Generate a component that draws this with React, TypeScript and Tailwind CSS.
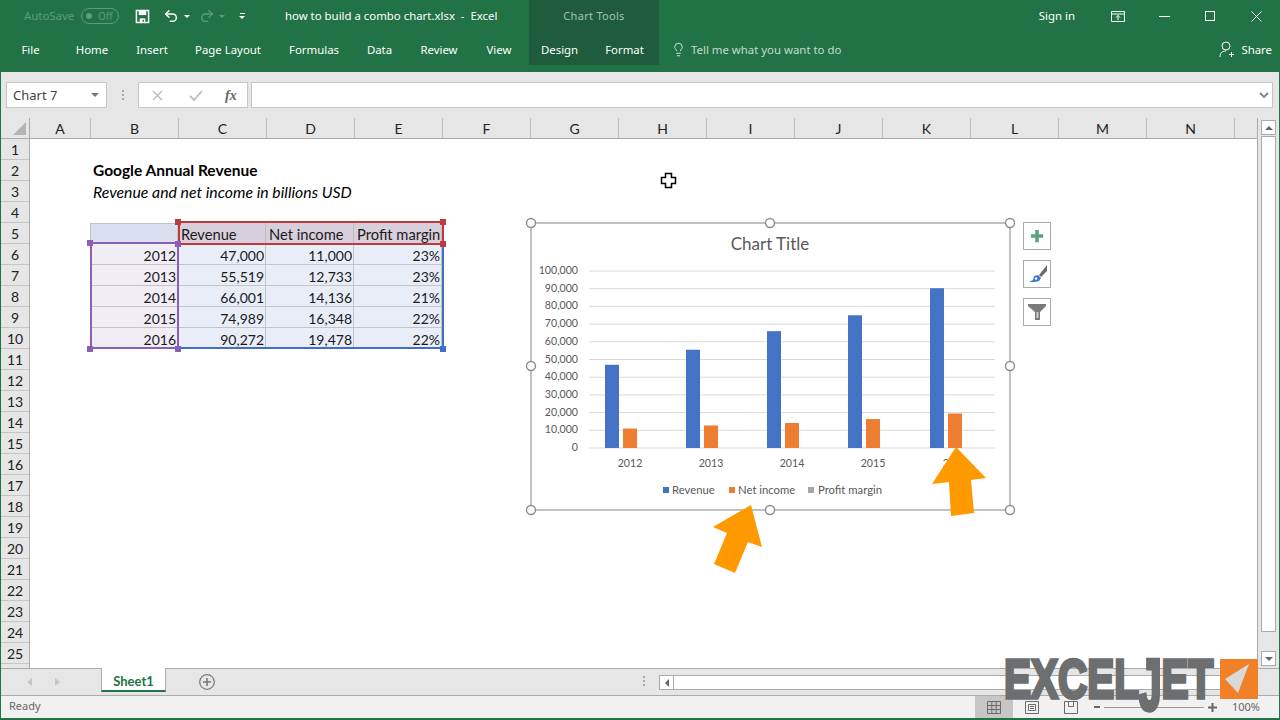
// File: App.tsx
import { Lightbulb, Undo2, Redo2 } from "lucide-react";

const tabs = [
    ["Home", "w-[62px]"],
    ["Insert", "w-[58px]"],
    ["Page Layout", "w-[94px]"],
    ["Formulas", "w-[78px]"],
    ["Data", "w-[53px]"],
    ["Review", "w-[66px]"],
    ["View", "w-[54px]"],
];
const columns = ["B", "C", "D", "E", "F", "G", "H", "I", "J", "K", "L", "M", "N"];
const rowNumbers = Array.from({ length: 25 }, (_, i) => i + 1);
const tableRows = [
    ["2012", "47,000", "11,000", "23%"],
    ["2013", "55,519", "12,733", "23%"],
    ["2014", "66,001", "14,136", "21%"],
    ["2015", "74,989", "16,348", "22%"],
    ["2016", "90,272", "19,478", "22%"],
];
const yLabels = ["100,000", "90,000", "80,000", "70,000", "60,000", "50,000", "40,000", "30,000", "20,000", "10,000", "0"];
const bars = [
    { year: "2012", x: 605, rev: 47000, net: 11000 },
    { year: "2013", x: 686, rev: 55519, net: 12733 },
    { year: "2014", x: 767, rev: 66001, net: 14136 },
    { year: "2015", x: 848, rev: 74989, net: 16348 },
    { year: "2016", x: 930, rev: 90272, net: 19478 },
];
const handles = [[531, 223], [770, 223], [1010, 223], [531, 366], [1010, 366], [531, 510], [770, 510], [1010, 510]];

const Square = ({ className }: { className: string }) => (
    <div className={`absolute w-[6px] h-[6px] ${className}`} />
);

const Chart = () => (
    <svg className="absolute left-[519px] top-[76px] w-[500px] h-[370px] font-['Lato',sans-serif]" viewBox="520 215 500 370">
        <rect x="531" y="223" width="479" height="287" fill="white" stroke="#a0a0a0" strokeWidth="1.3" />
        <text x="770" y="250" textAnchor="middle" fontSize="17" fill="#595959">Chart Title</text>
        {yLabels.map((label, i) => (
            <g key={label}>
                <line x1="589" x2="995" y1={271 + i * 17.7} y2={271 + i * 17.7} stroke="#d9d9d9" strokeWidth="1" />
                <text x="578" y={274 + i * 17.7} textAnchor="end" fontSize="10.6" fill="#595959">{label}</text>
            </g>
        ))}
        {bars.map((b) => (
            <g key={b.year}>
                <rect x={b.x} y={448 - (b.rev / 100000) * 177} width="14" height={(b.rev / 100000) * 177} fill="#4472c4" />
                <rect x={b.x + 18} y={448 - (b.net / 100000) * 177} width="14" height={(b.net / 100000) * 177} fill="#ed7d31" />
                <text x={b.x + 25} y="467" textAnchor="middle" fontSize="10.6" fill="#595959">{b.year}</text>
            </g>
        ))}
        <rect x="663" y="487" width="6" height="6" fill="#4472c4" />
        <text x="672" y="494" fontSize="11.3" fill="#595959">Revenue</text>
        <rect x="729" y="487" width="6" height="6" fill="#ed7d31" />
        <text x="738" y="494" fontSize="11.3" fill="#595959">Net income</text>
        <rect x="808" y="487" width="6" height="6" fill="#a5a5a5" />
        <text x="818" y="494" fontSize="11.3" fill="#595959">Profit margin</text>
        {handles.map(([x, y]) => (
            <circle key={`${x}-${y}`} cx={x} cy={y} r="4.5" fill="white" stroke="#8c8c8c" strokeWidth="1.4" />
        ))}
        <polygon points="751,505 762,547 748,542 735,573 714,564 727,533 713,527" fill="#ff9900" />
        <polygon points="956,447 986,478 971,480 974,513 951,516 949,482 932,484" fill="#ff9900" />
    </svg>
);

const ChartButtons = () => (
    <div className="absolute left-[1022px] top-[83px] flex flex-col gap-[10px]">
        <div className="w-7 h-7 bg-white border border-[#ababab] flex items-center justify-center">
            <svg width="14" height="14" viewBox="0 0 16 16"><path d="M6 1h4v5h5v4h-5v5H6v-5H1V6h5z" fill="#5f9e7e" /></svg>
        </div>
        <div className="w-7 h-7 bg-white border border-[#ababab]">
            <svg width="26" height="26" viewBox="0 0 26 26">
                <path d="M23 4v6l-6 6-2-2z" fill="#6b6b6b" />
                <path d="M5 21l4-2 1-4 4-1 3 3-2 3-4 1z" fill="#3f78c4" />
                <circle cx="12" cy="17.500" r="1.200" fill="white" />
            </svg>
        </div>
        <div className="w-7 h-7 bg-white border border-[#ababab] flex items-center justify-center">
            <svg width="20" height="20" viewBox="0 0 20 20">
                <path d="M1 2h18v2l-6 6v8H8v-8L1 4z" fill="#7a7a7a" />
                <path d="M9.500 10h2v6h-2z" fill="#cfcfcf" />
            </svg>
        </div>
    </div>
);

const DataTable = () => (
    <div className="col-start-2 col-span-4 row-start-5 row-span-6 relative grid grid-cols-[repeat(4,88px)] grid-rows-[repeat(6,21px)] text-[14px] text-[#1a1a1a] font-['Lato',sans-serif]">
        <div className="bg-[#dbe0f1] border border-[#c4c4c4]" />
        {["Revenue", "Net income", "Profit margin"].map((h) => (
            <div key={h} className="bg-[#d8cfdd] border-r border-[#bdbdbd] pl-[3px] text-[14.7px] leading-[22px] overflow-hidden whitespace-nowrap">{h}</div>
        ))}
        {tableRows.map((row) =>
            row.map((v, i) => (
                <div
                    key={`${row[0]}-${i}`}
                    className={`${i === 0 ? "bg-[#f1edf4]" : "bg-[#e9edf8]"} border-b border-r border-[#c4c4c4] text-right pr-[1px] leading-[23px]`}
                >
                    {v}
                </div>
            ))
        )}
        {/* colored range selections */}
        <div className="absolute left-[88px] -top-[2px] w-[266px] h-[24px] border-2 border-[#c0393f]" />
        <div className="absolute left-0 top-[19px] w-[89px] h-[107px] border-2 border-[#8a5fb8]" />
        <div className="absolute left-[87px] top-[21px] w-[267px] h-[105px] border-2 border-t-0 border-l-0 border-[#3f70c8]" />
        <Square className="left-[85px] -top-[4px] bg-[#c0393f]" />
        <Square className="left-[350px] -top-[4px] bg-[#c0393f]" />
        <Square className="left-[350px] top-[18px] bg-[#c0393f]" />
        <Square className="-left-[3px] top-[17px] bg-[#8a5fb8]" />
        <Square className="left-[85px] top-[18px] bg-[#8a5fb8]" />
        <Square className="-left-[3px] top-[123px] bg-[#8a5fb8]" />
        <Square className="left-[85px] top-[123px] bg-[#8a5fb8]" />
        <Square className="left-[350px] top-[123px] bg-[#3f70c8]" />
    </div>
);

const Logo = () => (
    <div className="absolute left-[1003px] top-[659px] flex items-start gap-[5px]">
        <div className="w-[211px] h-[56px] font-['Liberation_Sans',sans-serif]">
            <div className="origin-top scale-y-[1.36] whitespace-nowrap text-[40.5px] leading-[30px] font-bold text-[#6d6e70] [-webkit-text-stroke:2.5px_#6d6e70]">
                EXCEL<span className="inline-block origin-top scale-y-[1.3]">J</span>ET
            </div>
        </div>
        <div className="w-[38px] h-[40px] bg-[#f18127]">
            <svg width="38" height="40" viewBox="0 0 38 40"><polygon points="29,5 5,20 18,34" fill="#d9d9d9" /></svg>
        </div>
    </div>
);

export default function App() {
    return (
        <div className="relative w-[1280px] h-[720px] overflow-hidden flex flex-col border-x border-[#217346] bg-white font-['Noto_Sans',sans-serif]">
            {/* title bar and ribbon tabs */}
            <div className="h-[72px] shrink-0 flex -mx-px bg-[#217346] text-white text-[11.4px]">
                <div className="w-[529px] flex flex-col">
                    <div className="h-[32px] flex items-center">
                        <span className="ml-[24px] w-[57px] text-[#5c9b7b]">AutoSave</span>
                        <div className="w-[38px] h-[16px] rounded-full border border-[#5c9b7b] flex items-center gap-[6px] pl-[4px] text-[10px] text-[#5c9b7b]">
                            <div className="w-[6px] h-[6px] rounded-full bg-[#5c9b7b]" />
                            <span>Off</span>
                        </div>
                        <svg className="ml-[16px]" width="15" height="15" viewBox="0 0 16 16" fill="none">
                            <path d="M1.500 1.500h13v13h-13z" stroke="white" strokeWidth="1.600" />
                            <path d="M4 1.500h8v5H4z" fill="white" />
                            <path d="M5 10h6v4.500H5z" fill="white" />
                            <path d="M8 11.500h1.500v2H8z" fill="#217346" />
                        </svg>
                        <Undo2 className="ml-[13px]" size={16} strokeWidth={2.2} />
                        <span className="ml-[5px] w-0 h-0 border-x-[3px] border-x-transparent border-t-[3px] border-t-white" />
                        <Redo2 className="ml-[9px] text-[#5c9b7b]" size={16} strokeWidth={2} />
                        <span className="ml-[4px] w-0 h-0 border-x-[3px] border-x-transparent border-t-[3px] border-t-[#5c9b7b]" />
                        <div className="ml-[14px] flex flex-col items-center gap-[2px]">
                            <div className="w-[5px] h-px bg-white" />
                            <span className="w-0 h-0 border-x-[3px] border-x-transparent border-t-[3px] border-t-white" />
                        </div>
                        <span className="ml-[40px] whitespace-pre">how to build a combo chart.xlsx  -  Excel</span>
                    </div>
                    <div className="h-[33px] pt-[2px] flex items-center">
                        <span className="w-[61px] text-center">File</span>
                        {tabs.map(([t, w]) => (
                            <span key={t} className={`${w} text-center`}>{t}</span>
                        ))}
                    </div>
                </div>
                <div className="w-[130px] h-[65px] bg-[#1e5c3b] flex flex-col">
                    <div className="h-[32px] flex items-center justify-center text-[11px] tracking-[0.3px] text-[#a3c4b1]">Chart Tools</div>
                    <div className="h-[33px] pt-[2px] flex items-center">
                        <span className="w-[62px] text-center">Design</span>
                        <span className="w-[70px] text-center">Format</span>
                    </div>
                </div>
                <div className="flex-1 flex flex-col">
                    <div className="h-[32px] flex items-center justify-end">
                        <span className="mr-[36px]">Sign in</span>
                        <svg className="mr-[34px]" width="14" height="11" viewBox="0 0 14 11" fill="none" stroke="white">
                            <path d="M.5.500h13v10H.5zM.5 3h13M7 9V4.500M5 6.500l2-2 2 2" />
                        </svg>
                        <div className="w-[11px] h-px bg-white mr-[35px]" />
                        <div className="w-[10px] h-[10px] border border-white mr-[36px]" />
                        <svg className="mr-[18px]" width="11" height="11" viewBox="0 0 11 11" stroke="white"><path d="M.5.500l10 10M10.500.500l-10 10" /></svg>
                    </div>
                    <div className="h-[33px] pt-[2px] flex items-center text-[#c4dccf]">
                        <Lightbulb className="ml-[12px] text-white" size={15} strokeWidth={1.2} />
                        <span className="ml-[5px]">Tell me what you want to do</span>
                        <svg className="ml-auto text-white" width="16" height="17" viewBox="0 0 16 17" fill="none" stroke="white">
                            <circle cx="7" cy="5" r="4" />
                            <path d="M1 16c0-4 2-6 6-6M10 13.500h5M12.500 11v5" />
                        </svg>
                        <span className="ml-[6px] mr-[8px] text-white">Share</span>
                    </div>
                </div>
            </div>

            {/* formula bar */}
            <div className="h-[46px] shrink-0 bg-[#e6e6e6] flex items-center pl-[5px] pr-[6px]">
                <div className="w-[101px] h-[26px] bg-white border border-[#c6c6c6] flex items-center justify-between pl-[6px] pr-[7px] text-[13px] text-[#444]">
                    <span className="pt-[1px]">Chart 7</span>
                    <span className="w-0 h-0 border-x-[4px] border-x-transparent border-t-[4px] border-t-[#777]" />
                </div>
                <div className="w-[31px] flex flex-col items-center gap-[2px]">
                    <div className="w-[2px] h-[2px] bg-[#aaa]" />
                    <div className="w-[2px] h-[2px] bg-[#aaa]" />
                    <div className="w-[2px] h-[2px] bg-[#aaa]" />
                </div>
                <div className="w-[110px] h-[26px] bg-white border border-[#c6c6c6] flex items-center pl-[13px]">
                    <svg width="11" height="11" viewBox="0 0 11 11" stroke="#bdbdbd" strokeWidth="1.500"><path d="M1 1l9 9M10 1l-9 9" /></svg>
                    <svg className="ml-[26px]" width="14" height="11" viewBox="0 0 14 11" stroke="#bdbdbd" strokeWidth="1.800" fill="none"><path d="M1 6l4 4 8-9" /></svg>
                    <span className="ml-[22px] font-['Liberation_Serif',serif] italic font-bold text-[14px] text-[#666]">fx</span>
                </div>
                <div className="ml-[3px] flex-1 h-[26px] bg-white border border-[#c6c6c6] flex items-center justify-end pr-[3px]">
                    <svg width="10" height="7" viewBox="0 0 10 7" fill="none" stroke="#808080" strokeWidth="1.800"><path d="M1 1l4 4 4-4" /></svg>
                </div>
            </div>

            {/* sheet and vertical scrollbar */}
            <div className="h-[550px] shrink-0 flex">
                <div className="w-[1257px] flex flex-col border-r border-[#ababab]">
                    <div className="h-[21px] shrink-0 flex bg-[#e6e6e6] border-b border-[#ababab] text-[14px] text-[#222] font-['Lato',sans-serif]">
                        <div className="w-[29px] border-r border-[#ababab] relative">
                            <div className="absolute right-[3px] bottom-[3px] w-0 h-0 border-l-[13px] border-l-transparent border-b-[13px] border-b-[#b4b4b4]" />
                        </div>
                        <div className="w-[61px] border-r border-[#bdbdbd] text-center leading-[21px]">A</div>
                        {columns.map((c) => (
                            <div key={c} className="w-[88px] border-r border-[#bdbdbd] text-center leading-[21px]">{c}</div>
                        ))}
                    </div>
                    <div className="relative flex-1 flex overflow-hidden">
                        <div className="w-[29px] shrink-0 bg-[#e6e6e6] border-r border-[#ababab] text-[14px] text-[#222] font-['Lato',sans-serif]">
                            {rowNumbers.map((n) => (
                                <div key={n} className="h-[21px] border-b border-[#c6c6c6] text-center leading-[21px]">{n}</div>
                            ))}
                        </div>
                        <div className="flex-1 grid grid-cols-[60px_repeat(13,88px)] grid-rows-[repeat(25,21px)] font-['Lato',sans-serif]">
                            <div className="col-start-2 col-span-4 row-start-2 pl-[3px] text-[15.5px] font-bold leading-[21px] text-black">Google Annual Revenue</div>
                            <div className="col-start-2 col-span-4 row-start-3 pl-[3px] text-[15.8px] italic leading-[21px] text-black">Revenue and net income in billions USD</div>
                            <DataTable />
                        </div>
                        <Chart />
                        <ChartButtons />
                        {/* excel cross cursor */}
                        <svg className="absolute left-[659px] top-[33px]" width="17" height="17" viewBox="0 0 17 17">
                            <path d="M5.500 1.500h6v4h4v6h-4v4h-6v-4h-4v-6h4z" fill="white" stroke="black" strokeWidth="1.500" />
                        </svg>
                    </div>
                </div>
                <div className="flex-1 bg-[#e6e6e6] flex flex-col items-center py-[2px] gap-px">
                    <div className="w-[15px] h-[15px] bg-white border border-[#ababab] flex items-center justify-center">
                        <span className="w-0 h-0 border-x-[4px] border-x-transparent border-b-[4px] border-b-[#666]" />
                    </div>
                    <div className="w-[15px] h-[496px] bg-white border border-[#ababab]" />
                    <div className="flex-1" />
                    <div className="w-[15px] h-[15px] bg-white border border-[#ababab] flex items-center justify-center">
                        <span className="w-0 h-0 border-x-[4px] border-x-transparent border-t-[4px] border-t-[#666]" />
                    </div>
                </div>
            </div>

            {/* sheet tabs */}
            <div className="h-[28px] shrink-0 bg-[#e6e6e6] border-t border-[#ababab] border-b flex items-start">
                <span className="ml-[26px] mt-[9px] w-0 h-0 border-y-[4px] border-y-transparent border-r-[5px] border-r-[#c6c6c6]" />
                <span className="ml-[23px] mt-[9px] w-0 h-0 border-y-[4px] border-y-transparent border-l-[5px] border-l-[#c6c6c6]" />
                <div className="ml-[41px] w-[65px] h-[24px] -mt-px bg-white border-x border-[#ababab] border-b-2 border-b-[#217346] text-[13px] font-bold text-[#217346] text-center leading-[26px] font-['Lato',sans-serif]">Sheet1</div>
                <svg className="ml-[33px] mt-[5px]" width="16" height="16" viewBox="0 0 16 16" fill="none" stroke="#7a7a7a" strokeWidth="1.200">
                    <circle cx="8" cy="8" r="7.300" />
                    <path d="M4 8h8M8 4v8" strokeWidth="1.600" />
                </svg>
                <div className="ml-[428px] mt-[7px] flex flex-col gap-[2px]">
                    <div className="w-[2px] h-[2px] bg-[#aaa]" />
                    <div className="w-[2px] h-[2px] bg-[#aaa]" />
                    <div className="w-[2px] h-[2px] bg-[#aaa]" />
                </div>
                <div className="ml-[14px] mt-[6px] w-[15px] h-[15px] bg-white border border-[#ababab] flex items-center justify-center">
                    <span className="w-0 h-0 border-y-[4px] border-y-transparent border-r-[4px] border-r-[#666]" />
                </div>
                <div className="w-[584px] h-[15px] mt-[6px] bg-white border border-l-0 border-[#ababab]" />
            </div>

            {/* status bar */}
            <div className="h-[22px] shrink-0 bg-[#f1f1f1] flex items-center text-[11px] text-[#666]">
                <span className="ml-[8px] -mt-[2px]">Ready</span>
                <div className="ml-auto w-[38px] h-full bg-[#c6c6c6] flex items-center justify-center">
                    <svg width="14" height="13" viewBox="0 0 14 13" fill="none" stroke="#6b6b6b"><path d="M.5.500h13v12H.5zM.5 4.500h13M.5 8.500h13M4.800.500v12M9.200.500v12" /></svg>
                </div>
                <svg className="ml-[12px]" width="14" height="13" viewBox="0 0 14 13" fill="none" stroke="#6b6b6b"><path d="M.5.500h13v12H.5zM3.500 3.500h7v6h-7zM5 5.500h4M5 7.500h4" /></svg>
                <svg className="ml-[25px]" width="14" height="13" viewBox="0 0 14 13" fill="none" stroke="#6b6b6b"><path d="M.5.500h13v12H.5zM4.500.500v5h5v-5" /></svg>
                <div className="ml-[16px] w-[6px] h-[2px] bg-[#666]" />
                <div className="ml-[4px] w-[100px] h-px bg-[#9a9a9a]" />
                <svg className="ml-[4px]" width="9" height="9" viewBox="0 0 9 9" stroke="#666" strokeWidth="2"><path d="M0 4.500h9M4.500 0v9" /></svg>
                <span className="ml-[15px] mr-[19px] text-[11px]">100%</span>
            </div>
            <div className="h-[2px] shrink-0 -mx-px bg-[#217346]" />

            <Logo />
        </div>
    );
}
